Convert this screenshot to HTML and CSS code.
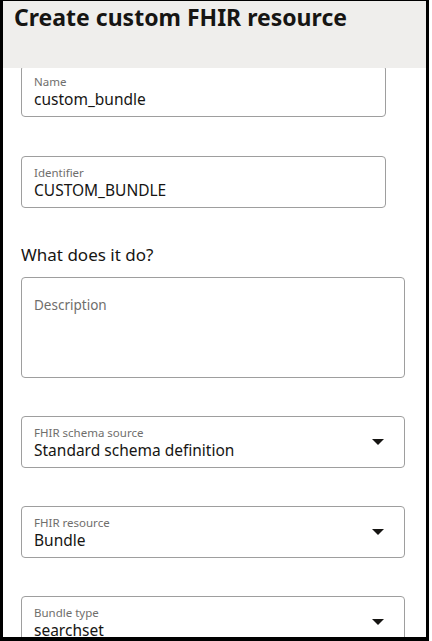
FILE: index.html
```html
<!DOCTYPE html>
<html lang="en">
<head>
<meta charset="utf-8">
<title>Create custom FHIR resource</title>
<link rel="stylesheet" href="styles.css">
</head>
<body>
<div class="frame">
  <header class="header">
    <h1 class="title">Create custom FHIR resource</h1>
  </header>
  <div class="viewport">
    <form class="form">
      <div class="field narrow">
        <span class="label">Name</span>
        <span class="value">custom_bundle</span>
      </div>
      <div class="field narrow">
        <span class="label">Identifier</span>
        <span class="value">CUSTOM_BUNDLE</span>
      </div>
      <h2 class="section">What does it do?</h2>
      <div class="textarea">
        <span class="placeholder">Description</span>
      </div>
      <div class="field select">
        <div class="select-text">
          <span class="label">FHIR schema source</span>
          <span class="value">Standard schema definition</span>
        </div>
        <svg class="caret" width="12" height="6" viewBox="0 0 12 6"><path d="M0 0H12L6 6Z" fill="#161513"/></svg>
      </div>
      <div class="field select">
        <div class="select-text">
          <span class="label">FHIR resource</span>
          <span class="value">Bundle</span>
        </div>
        <svg class="caret" width="12" height="6" viewBox="0 0 12 6"><path d="M0 0H12L6 6Z" fill="#161513"/></svg>
      </div>
      <div class="field select">
        <div class="select-text">
          <span class="label">Bundle type</span>
          <span class="value">searchset</span>
        </div>
        <svg class="caret" width="12" height="6" viewBox="0 0 12 6"><path d="M0 0H12L6 6Z" fill="#161513"/></svg>
      </div>
    </form>
  </div>
</div>
</body>
</html>
```
FILE: styles.css
```css
* { box-sizing: border-box; }
html, body { margin: 0; padding: 0; background: #fff; }
body {
  font-family: "Noto Sans", "Open Sans", sans-serif;
  color: #161513;
}
.frame {
  width: 429px;
  height: 641px;
  border: 3px solid #000;
  border-top-width: 1px;
  border-bottom-width: 4px;
  display: flex;
  flex-direction: column;
  overflow: hidden;
  background: #fff;
}
.header {
  flex: 0 0 67px;
  background: #efeeec;
  padding: 0 0 0 11px;
}
.title {
  margin: 0;
  font-size: 23px;
  line-height: 32px;
  font-weight: 700;
  color: #161513;
}
.viewport {
  flex: 1 1 auto;
  overflow: hidden;
}
.form {
  margin-top: -3px;
  padding: 0 18px;
  display: flex;
  flex-direction: column;
  gap: 39px;
}
.field {
  border: 1px solid #9e9e9e;
  border-radius: 4px;
  height: 52px;
  padding: 9px 12px 0;
  display: flex;
  flex-direction: column;
  width: 384px;
  flex: none;
}
.field.narrow { width: 365px; }
.label {
  display: block;
  font-size: 11.5px;
  line-height: 14px;
  color: #6f6e6c;
}
.value {
  display: block;
  font-size: 15.5px;
  line-height: 20px;
  color: #161513;
}
.section {
  margin: -4px 0 -29px;
  font-size: 17px;
  line-height: 24px;
  font-weight: 400;
  color: #161513;
}
.textarea {
  width: 384px;
  height: 101px;
  border: 1px solid #9e9e9e;
  border-radius: 4px;
  padding: 15px 12px 0;
  margin-bottom: -1px;
  flex: none;
}
.placeholder {
  font-size: 13.5px;
  line-height: 18px;
  color: #6f6e6c;
}
.field.select {
  flex-direction: row;
  align-items: flex-start;
  justify-content: space-between;
  padding-right: 20px;
}
.field.select + .field.select { margin-top: -1px; }
.select-text {
  display: flex;
  flex-direction: column;
}
.caret {
  align-self: center;
  margin-top: -9px;
  flex: none;
}
```
